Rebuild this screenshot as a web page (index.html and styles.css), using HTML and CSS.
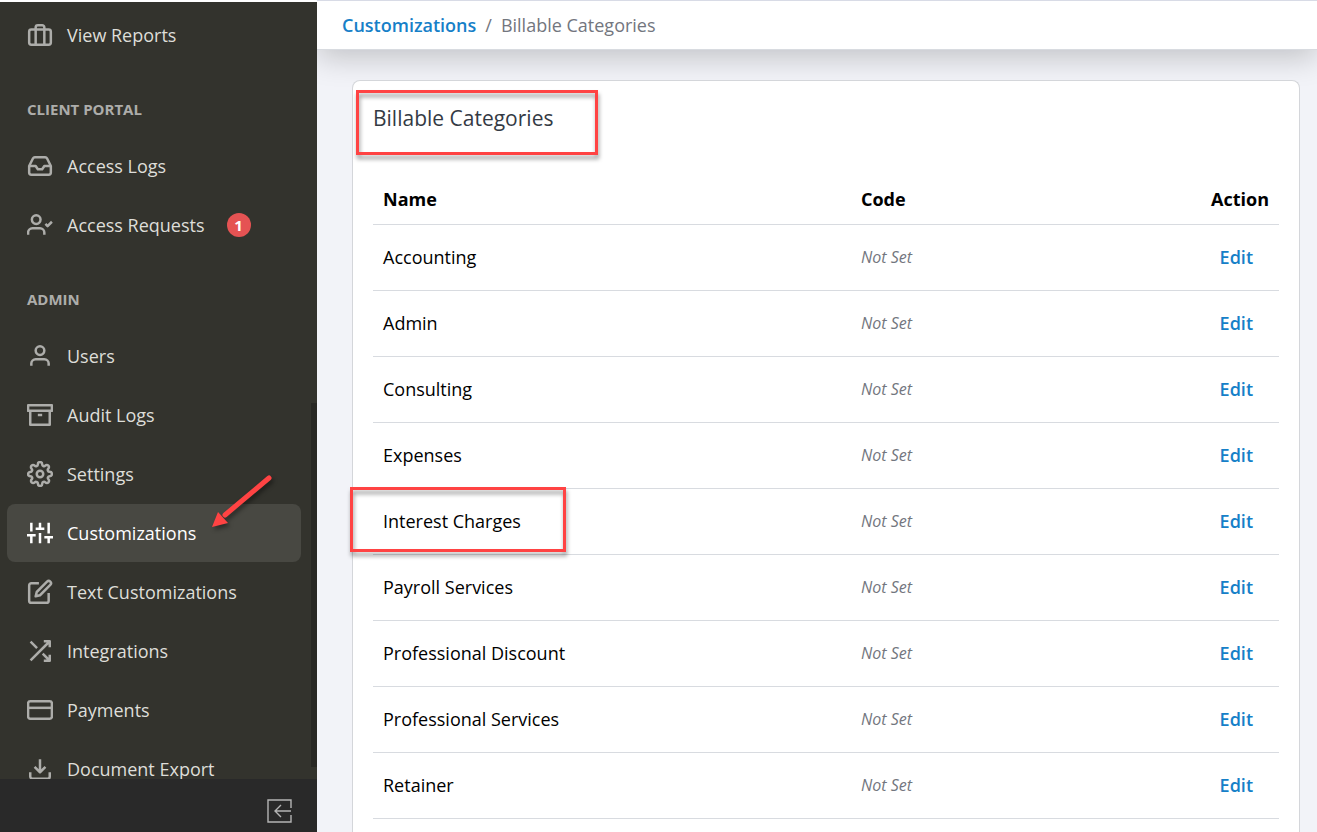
FILE: index.html
```html
<!DOCTYPE html>
<html lang="en">
<head>
    <meta charset="UTF-8">
    <meta name="viewport" content="width=device-width, initial-scale=1.0">
    <title>Billable Categories</title>
    <link rel="stylesheet" href="styles.css">
</head>
<body>
    <aside class="sidebar">
        <nav class="nav">
            <a href="#" class="nav-item">
                <svg class="icon" viewBox="0 0 24 24"><rect x="2" y="7" width="20" height="14" rx="2"/><path d="M16 21V5a2 2 0 0 0-2-2h-4a2 2 0 0 0-2 2v16"/></svg>
                View Reports
            </a>

            <h2 class="nav-heading">CLIENT PORTAL</h2>
            <a href="#" class="nav-item">
                <svg class="icon" viewBox="0 0 24 24"><path d="M22 12h-6l-2 3h-4l-2-3H2"/><path d="M5.45 5.11L2 12v6a2 2 0 0 0 2 2h16a2 2 0 0 0 2-2v-6l-3.45-6.89A2 2 0 0 0 16.76 4H7.24a2 2 0 0 0-1.79 1.11z"/></svg>
                Access Logs
            </a>
            <a href="#" class="nav-item">
                <svg class="icon" viewBox="0 0 24 24"><path d="M16 21v-2a4 4 0 0 0-4-4H5a4 4 0 0 0-4 4v2"/><circle cx="8.5" cy="7" r="4"/><path d="M17 11l2 2 4-4"/></svg>
                Access Requests
                <span class="badge">1</span>
            </a>

            <h2 class="nav-heading">ADMIN</h2>
            <a href="#" class="nav-item">
                <svg class="icon" viewBox="0 0 24 24"><path d="M20 21v-2a4 4 0 0 0-4-4H8a4 4 0 0 0-4 4v2"/><circle cx="12" cy="7" r="4"/></svg>
                Users
            </a>
            <a href="#" class="nav-item">
                <svg class="icon" viewBox="0 0 24 24"><path d="M21 8v13H3V8"/><path d="M1 3h22v5H1z"/><path d="M10 12h4"/></svg>
                Audit Logs
            </a>
            <a href="#" class="nav-item">
                <svg class="icon" viewBox="0 0 24 24"><circle cx="12" cy="12" r="3"/><path d="M19.4 15a1.65 1.65 0 0 0 .33 1.82l.06.06a2 2 0 0 1 0 2.83 2 2 0 0 1-2.83 0l-.06-.06a1.65 1.65 0 0 0-1.82-.33 1.65 1.65 0 0 0-1 1.51V21a2 2 0 0 1-2 2 2 2 0 0 1-2-2v-.09A1.65 1.65 0 0 0 9 19.4a1.65 1.65 0 0 0-1.82.33l-.06.06a2 2 0 0 1-2.83 0 2 2 0 0 1 0-2.83l.06-.06a1.65 1.65 0 0 0 .33-1.82 1.65 1.65 0 0 0-1.51-1H3a2 2 0 0 1-2-2 2 2 0 0 1 2-2h.09A1.65 1.65 0 0 0 4.6 9a1.65 1.65 0 0 0-.33-1.82l-.06-.06a2 2 0 0 1 0-2.83 2 2 0 0 1 2.83 0l.06.06a1.65 1.65 0 0 0 1.82.33H9a1.65 1.65 0 0 0 1-1.51V3a2 2 0 0 1 2-2 2 2 0 0 1 2 2v.09a1.65 1.65 0 0 0 1 1.51 1.65 1.65 0 0 0 1.82-.33l.06-.06a2 2 0 0 1 2.83 0 2 2 0 0 1 0 2.83l-.06.06a1.65 1.65 0 0 0-.33 1.82V9a1.65 1.65 0 0 0 1.51 1H21a2 2 0 0 1 2 2 2 2 0 0 1-2 2h-.09a1.65 1.65 0 0 0-1.51 1z"/></svg>
                Settings
            </a>
            <a href="#" class="nav-item active">
                <svg class="icon" viewBox="0 0 24 24"><path d="M4 21.5V14M4 10.5V2.5M12 21.5V12M12 8V2.5M20 21.5V16M20 12.5V2.5M0 14h8M8 8h8M16 16h8"/></svg>
                Customizations
                <svg class="arrow" viewBox="0 0 70 64"><path d="M62 7L18 44" stroke="#ff4343" stroke-width="5" stroke-linecap="round"/><path d="M5 56L11 41L21 52Z" fill="#ff4343"/></svg>
            </a>
            <a href="#" class="nav-item">
                <svg class="icon" viewBox="0 0 24 24"><path d="M11 4H4a2 2 0 0 0-2 2v14a2 2 0 0 0 2 2h14a2 2 0 0 0 2-2v-7"/><path d="M18.5 2.5a2.121 2.121 0 0 1 3 3L12 15l-4 1 1-4 9.5-9.5z"/></svg>
                Text Customizations
            </a>
            <a href="#" class="nav-item">
                <svg class="icon" viewBox="0 0 24 24"><path d="M15.5 3H21v5.500M3.300 20.700L21 3M21 15.500V21h-5.500M14.500 14.500L21 21M3.300 3.300l6 6"/></svg>
                Integrations
            </a>
            <a href="#" class="nav-item">
                <svg class="icon" viewBox="0 0 24 24"><rect x="1" y="4" width="22" height="16" rx="2"/><path d="M1 10h22"/></svg>
                Payments
            </a>
            <a href="#" class="nav-item">
                <svg class="icon" viewBox="0 0 24 24"><path d="M21 15v4a2 2 0 0 1-2 2H5a2 2 0 0 1-2-2v-4"/><path d="M7 10l5 5 5-5M12 15V3"/></svg>
                Document Export
            </a>
            <div class="scroll-thumb"></div>
        </nav>
        <div class="sidebar-footer">
            <button type="button" class="collapse" aria-label="Collapse menu">
                <svg viewBox="0 0 26 26"><path d="M24 10V2H1V24H24V17M24 13H8M14 7L8 13L14 19"/></svg>
            </button>
        </div>
    </aside>

    <main class="main">
        <header class="breadcrumb">
            <a href="#" class="link">Customizations</a>
            <span>/</span>
            <span>Billable Categories</span>
        </header>

        <section class="card">
            <h1 class="card-title">Billable Categories<span class="mark mark-title"></span></h1>
            <table class="table">
                <thead>
                    <tr>
                        <th class="col-name">Name</th>
                        <th>Code</th>
                        <th class="col-action">Action</th>
                    </tr>
                </thead>
                <tbody>
                    <tr>
                        <td>Accounting</td>
                        <td class="code">Not Set</td>
                        <td class="col-action"><a href="#" class="link edit">Edit</a></td>
                    </tr>
                    <tr>
                        <td>Admin</td>
                        <td class="code">Not Set</td>
                        <td class="col-action"><a href="#" class="link edit">Edit</a></td>
                    </tr>
                    <tr>
                        <td>Consulting</td>
                        <td class="code">Not Set</td>
                        <td class="col-action"><a href="#" class="link edit">Edit</a></td>
                    </tr>
                    <tr>
                        <td>Expenses</td>
                        <td class="code">Not Set</td>
                        <td class="col-action"><a href="#" class="link edit">Edit</a></td>
                    </tr>
                    <tr>
                        <td class="marked">Interest Charges<span class="mark mark-row"></span></td>
                        <td class="code">Not Set</td>
                        <td class="col-action"><a href="#" class="link edit">Edit</a></td>
                    </tr>
                    <tr>
                        <td>Payroll Services</td>
                        <td class="code">Not Set</td>
                        <td class="col-action"><a href="#" class="link edit">Edit</a></td>
                    </tr>
                    <tr>
                        <td>Professional Discount</td>
                        <td class="code">Not Set</td>
                        <td class="col-action"><a href="#" class="link edit">Edit</a></td>
                    </tr>
                    <tr>
                        <td>Professional Services</td>
                        <td class="code">Not Set</td>
                        <td class="col-action"><a href="#" class="link edit">Edit</a></td>
                    </tr>
                    <tr>
                        <td>Retainer</td>
                        <td class="code">Not Set</td>
                        <td class="col-action"><a href="#" class="link edit">Edit</a></td>
                    </tr>
                </tbody>
            </table>
        </section>
    </main>
</body>
</html>
```
FILE: styles.css
```css
* {
    box-sizing: border-box;
}
body {
    margin: 0;
    height: 100vh;
    display: flex;
    overflow: hidden;
    background-color: #f2f3f8;
    color: #000;
    font-family: "Segoe UI", "Open Sans", "Noto Sans", sans-serif;
    font-size: 18px;
    line-height: 24px;
}
a {
    text-decoration: none;
}

/* sidebar */
.sidebar {
    flex: none;
    width: 317px;
    display: flex;
    flex-direction: column;
    border-top: 2px solid #fff;
    background-color: #33332d;
}
.nav {
    position: relative;
    flex: 1;
    min-height: 0;
    overflow: hidden;
    padding: 4px 16px 0 7px;
}
.nav-item {
    position: relative;
    display: flex;
    align-items: center;
    gap: 14px;
    height: 58px;
    margin-bottom: 1px;
    padding: 0 20px;
    border-radius: 8px;
    color: #deded9;
}
.nav-item.active {
    background-color: #484842;
    color: #fff;
}
.nav-heading {
    height: 72px;
    margin: 0;
    padding: 32px 20px 0;
    color: #adadaa;
    font-size: 15px;
    font-weight: 700;
}
.icon {
    flex: none;
    width: 26px;
    height: 26px;
    fill: none;
    stroke: #adadaa;
    stroke-width: 2.3;
    stroke-linecap: butt;
    stroke-linejoin: round;
}
.active .icon {
    stroke: #fff;
}
.badge {
    width: 24px;
    margin-left: 8px;
    border-radius: 50%;
    background-color: #e55353;
    color: #fff;
    font-size: 15px;
    font-weight: 700;
    text-align: center;
}
.arrow {
    position: absolute;
    left: 200px;
    top: -33px;
    width: 70px;
    height: 64px;
    overflow: visible;
    fill: none;
    filter: drop-shadow(2px 3px 2px rgba(0,0,0,0.4));
    z-index: 1;
}
.scroll-thumb {
    position: absolute;
    right: 0;
    bottom: 12px;
    width: 6px;
    height: 364px;
    background-color: #282824;
}
.sidebar-footer {
    display: flex;
    justify-content: flex-end;
    padding: 19px 24px 8px;
    background-color: #292929;
}
.collapse {
    width: 26px;
    height: 26px;
    padding: 0;
    border: 0;
    background: none;
    cursor: pointer;
}
.collapse svg {
    display: block;
    fill: none;
    stroke: #b4b4b4;
    stroke-width: 1.4;
}

/* content */
.main {
    flex: 1;
    min-width: 0;
    display: flex;
    flex-direction: column;
    overflow: hidden;
}
.breadcrumb {
    display: flex;
    gap: 9px;
    padding: 12px 25px;
    border-top: 1px solid #d8dbe6;
    border-bottom: 1px solid #d8dbe0;
    background-color: #fff;
    color: #73767e;
    box-shadow: 0 8px 30px rgba(0,0,0,0.2);
}
.link {
    color: #1680c8;
    font-weight: 600;
}
.card {
    flex: 1 0 auto;
    position: relative;
    margin: 30px 17px 0 35px;
    padding: 20px 20px 0;
    border: 1px solid #d4d6da;
    border-bottom: 0;
    border-radius: 8px 8px 0 0;
    background-color: #fff;
}
.card-title {
    position: relative;
    margin: 0 0 34px;
    padding-bottom: 2px;
    color: #343a44;
    font-size: 21px;
    font-weight: 400;
    line-height: 30px;
    padding-top: 2px;
    margin-bottom: 32px;
}
.table {
    width: 100%;
    border-collapse: collapse;
}
th, td {
    height: 66px;
    padding: 0 10px;
    text-align: left;
    border-bottom: 1px solid #d8dbe0;
}
th {
    height: 57px;
    padding-top: 8px;
    font-weight: 700;
}
.col-name {
    width: 478px;
}
.table .col-action {
    text-align: right;
}
.code {
    color: #73767e;
    font-size: 16px;
    font-style: italic;
}
.edit {
    padding-right: 16px;
}

/* highlight boxes */
.marked {
    position: relative;
}
.mark {
    position: absolute;
    height: 65px;
    border: 3px solid #ff4343;
    filter: drop-shadow(1px 4px 2px rgba(0,0,0,0.4));
}
.mark-title {
    left: -17px;
    top: -11px;
    width: 242px;
}
.mark-row {
    left: -23px;
    top: -2px;
    width: 216px;
}
```
